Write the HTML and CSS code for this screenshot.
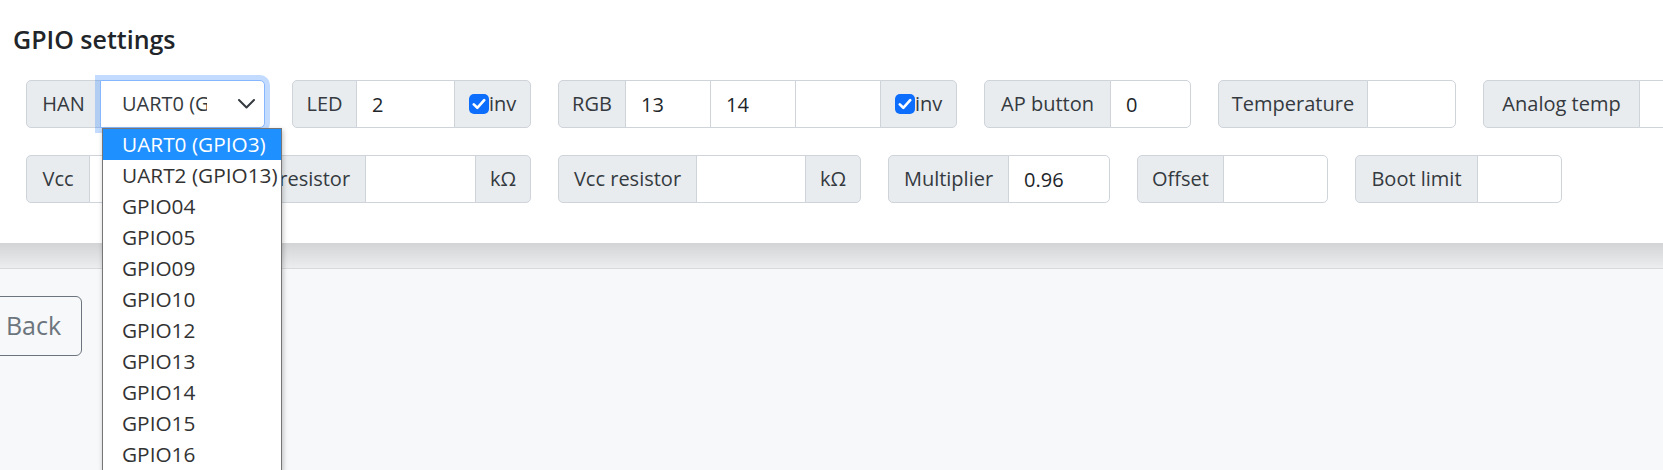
FILE: index.html
```html
<!DOCTYPE html>
<html lang="en">
<head>
<meta charset="utf-8">
<title>GPIO settings</title>
<link rel="stylesheet" href="styles.css">
</head>
<body>
<div class="card">
  <h5 class="card-title">GPIO settings</h5>
  <div class="grp-list">
    <div class="grp-row">
      <div class="igroup">
        <span class="itext w75">HAN</span>
        <div class="fselect">
          <span class="fselect-val">UART0 (GPIO3)</span>
          <svg class="chev" width="17" height="10" viewBox="0 0 17 10"><polyline points="1,1 8.5,8.5 16,1" fill="none" stroke="#343a40" stroke-width="2" stroke-linecap="round" stroke-linejoin="round"/></svg>
        </div>
      </div>
      <div class="igroup">
        <span class="itext w65">LED</span>
        <input class="finput w99" type="text" value="2" readonly>
        <span class="itext itext-chk w77"><span class="chk"><svg width="14" height="12" viewBox="0 0 14 12"><path d="M1.8 6.4 L5.3 9.8 L12.2 2.2" fill="none" stroke="#fff" stroke-width="2.6" stroke-linecap="round" stroke-linejoin="round"/></svg></span>inv</span>
      </div>
      <div class="igroup">
        <span class="itext w68">RGB</span>
        <input class="finput w86" type="text" value="13" readonly>
        <input class="finput w86" type="text" value="14" readonly>
        <input class="finput w86" type="text" value="" readonly>
        <span class="itext itext-chk w77"><span class="chk"><svg width="14" height="12" viewBox="0 0 14 12"><path d="M1.8 6.4 L5.3 9.8 L12.2 2.2" fill="none" stroke="#fff" stroke-width="2.6" stroke-linecap="round" stroke-linejoin="round"/></svg></span>inv</span>
      </div>
      <div class="igroup">
        <span class="itext w127">AP button</span>
        <input class="finput w81" type="text" value="0" readonly>
      </div>
      <div class="igroup">
        <span class="itext w150">Temperature</span>
        <input class="finput w89" type="text" value="" readonly>
      </div>
      <div class="igroup">
        <span class="itext w157">Analog temp</span>
        <input class="finput w100" type="text" value="" readonly>
      </div>
    </div>
    <div class="grp-row">
      <div class="igroup">
        <span class="itext w64">Vcc</span>
        <input class="finput w98" type="text" value="" readonly>
      </div>
      <div class="igroup">
        <span class="itext w152">GND resistor</span>
        <input class="finput w111" type="text" value="" readonly>
        <span class="itext w56">kΩ</span>
      </div>
      <div class="igroup">
        <span class="itext w139">Vcc resistor</span>
        <input class="finput w110" type="text" value="" readonly>
        <span class="itext w56">kΩ</span>
      </div>
      <div class="igroup">
        <span class="itext w121">Multiplier</span>
        <input class="finput w102" type="text" value="0.96" readonly>
      </div>
      <div class="igroup">
        <span class="itext w87">Offset</span>
        <input class="finput w105" type="text" value="" readonly>
      </div>
      <div class="igroup">
        <span class="itext w123">Boot limit</span>
        <input class="finput w85" type="text" value="" readonly>
      </div>
    </div>
  </div>
</div>
<div class="shade"></div>
<div class="foot">
  <button class="btn-back" type="button">Back</button>
</div>
<ul class="popup">
  <li class="sel">UART0 (GPIO3)</li>
  <li>UART2 (GPIO13)</li>
  <li>GPIO04</li>
  <li>GPIO05</li>
  <li>GPIO09</li>
  <li>GPIO10</li>
  <li>GPIO12</li>
  <li>GPIO13</li>
  <li>GPIO14</li>
  <li>GPIO15</li>
  <li>GPIO16</li>
</ul>
</body>
</html>
```
FILE: styles.css
```css
* { box-sizing: border-box; }
html, body { margin: 0; padding: 0; }
body {
  font-family: "Open Sans", "Noto Sans", "Liberation Sans", sans-serif;
  font-size: 20px;
  line-height: 1.5;
  color: #212529;
  background: #f7f8f9;
  width: 1663px;
  height: 470px;
  overflow: hidden;
  position: relative;
}
.card {
  background: #fff;
  padding: 24px 0 40px 13px;
}
.card-title {
  margin: 0 0 26px;
  font-size: 25px;
  font-weight: 600;
  line-height: 30px;
  color: #212529;
}
.grp-list {
  display: flex;
  flex-direction: column;
  gap: 27px;
  margin-left: 13px;
}
.grp-row {
  display: flex;
  gap: 27px;
  flex-wrap: nowrap;
}
.igroup {
  display: flex;
  height: 48px;
  flex: none;
}
.itext {
  display: flex;
  align-items: center;
  justify-content: center;
  height: 48px;
  background: #e9ecef;
  border: 1px solid #ced4da;
  white-space: nowrap;
  color: #343a40;
}
.itext-chk {
  justify-content: flex-start;
  padding-left: 14px;
}
.finput {
  font: inherit;
  color: #212529;
  background: #fff;
  border: 1px solid #ced4da;
  height: 48px;
  padding: 0 15px;
  outline: none;
}
.igroup > * + * { margin-left: -1px; }
.igroup > :first-child { border-radius: 5px 0 0 5px; }
.igroup > :last-child { border-radius: 0 5px 5px 0; }

.fselect {
  position: relative;
  z-index: 2;
  width: 165px;
  height: 48px;
  display: flex;
  align-items: center;
  padding-left: 21px;
  background: #fff;
  border: 1px solid #86b7fe;
  box-shadow: 0 0 0 5px rgba(13, 110, 253, .25);
  color: #343a40;
}
.fselect-val {
  width: 85px;
  overflow: hidden;
  white-space: nowrap;
  flex: none;
}
.chev {
  margin-left: auto;
  margin-right: 9px;
  flex: none;
}
.chk {
  width: 20px;
  height: 20px;
  border-radius: 5px;
  background: #0d6efd;
  display: inline-flex;
  align-items: center;
  justify-content: center;
  flex: none;
}

.w56 { width: 56px; }
.w64 { width: 64px; }
.w65 { width: 65px; }
.w68 { width: 68px; }
.w75 { width: 75px; }
.w77 { width: 77px; }
.w81 { width: 81px; }
.w85 { width: 85px; }
.w86 { width: 86px; }
.w87 { width: 87px; }
.w89 { width: 89px; }
.w98 { width: 98px; }
.w99 { width: 99px; }
.w100 { width: 100px; }
.w102 { width: 102px; }
.w105 { width: 105px; }
.w110 { width: 110px; }
.w111 { width: 111px; }
.w121 { width: 121px; }
.w123 { width: 123px; }
.w127 { width: 127px; }
.w139 { width: 139px; }
.w150 { width: 150px; }
.w152 { width: 152px; }
.w157 { width: 157px; }

.shade {
  height: 26px;
  background: linear-gradient(#d3d4d5, #ecedee);
  border-bottom: 1px solid #d8d9db;
}
.foot {
  padding-top: 27px;
}
.btn-back {
  font-family: inherit;
  font-size: 25px;
  line-height: 1.5;
  color: #6c757d;
  background: transparent;
  border: 1px solid #6c757d;
  border-radius: 6px;
  padding: 10px 0;
  width: 97px;
  margin-left: -15px;
}

.popup {
  position: absolute;
  left: 102px;
  top: 128px;
  width: 180px;
  margin: 0;
  padding: 0;
  list-style: none;
  background: #fff;
  border: 1px solid #767676;
  box-shadow: 1px 2px 5px rgba(0, 0, 0, .25);
  z-index: 10;
}
.popup li {
  height: 31px;
  line-height: 31px;
  padding-left: 19px;
  font-size: 20.8px;
  color: #333;
  white-space: nowrap;
}
.popup li.sel {
  background: #1e90ff;
  color: #fff;
}
```
